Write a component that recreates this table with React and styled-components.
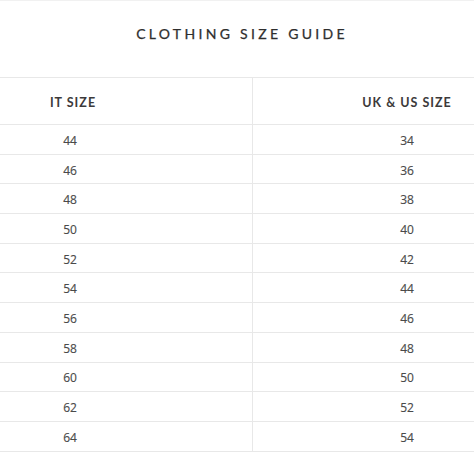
import React from "react";
import styled, { createGlobalStyle } from "styled-components";

const Global = createGlobalStyle`
  html, body { margin: 0; padding: 0; background: #fff; }
  body { font-family: Lato, "Noto Sans", sans-serif; }
`;

const Page = styled.div`
  width: 474px;
  height: 474px;
  overflow: hidden;
  border-top: 1px solid #f1f1f1;
  box-sizing: border-box;
`;

const Title = styled.h1`
  margin: 0;
  padding-top: 23px;
  padding-left: 10px;
  height: 76px;
  box-sizing: border-box;
  text-align: center;
  font-family: Lato, "Noto Sans", sans-serif;
  font-weight: 400;
  font-size: 14px;
  line-height: 20px;
  letter-spacing: 3.3px;
  color: #2e2e2e;
  -webkit-text-stroke: 0.25px #2e2e2e;
`;

const Table = styled.div`
  display: grid;
  grid-template-columns: 253px 1fr;
  border-top: 1px solid #e8e8e8;
`;

const Cell = styled.div`
  box-sizing: border-box;
  display: flex;
  align-items: center;
  justify-content: center;
  border-bottom: 1px solid #e8e8e8;
  border-right: ${(p) => (p.$first ? "1px solid #e8e8e8" : "none")};
  padding: ${(p) => (p.$first ? "0 106px 0 0" : "0 0 0 87px")};
  height: ${(p) => (p.$head ? "47px" : "29.7px")};
`;

const HeadText = styled.span`
  font-family: Lato, "Noto Sans", sans-serif;
  font-weight: 700;
  font-size: 12.5px;
  letter-spacing: 1px;
  color: #3c3a3a;
  padding-top: 2px;
`;

const Num = styled.span`
  font-family: "Open Sans", "Noto Sans", sans-serif;
  font-size: 12px;
  color: #4a4a4a;
  padding-top: 2px;
  -webkit-text-stroke: 0.15px #4a4a4a;
`;

const NumCell = styled(Cell)`
  padding: ${(p) => (p.$first ? "0 112px 0 0" : "0 0 0 87px")};
`;

const rows = [
  [44, 34], [46, 36], [48, 38], [50, 40], [52, 42], [54, 44],
  [56, 46], [58, 48], [60, 50], [62, 52], [64, 54],
];

export default function App() {
  return (
    <>
      <Global />
      <Page>
        <Title>CLOTHING SIZE GUIDE</Title>
        <Table>
          <Cell $first $head><HeadText>IT SIZE</HeadText></Cell>
          <Cell $head><HeadText>UK &amp; US SIZE</HeadText></Cell>
          {rows.map(([it, uk]) => (
            <React.Fragment key={it}>
              <NumCell $first><Num>{it}</Num></NumCell>
              <NumCell><Num>{uk}</Num></NumCell>
            </React.Fragment>
          ))}
        </Table>
      </Page>
    </>
  );
}
